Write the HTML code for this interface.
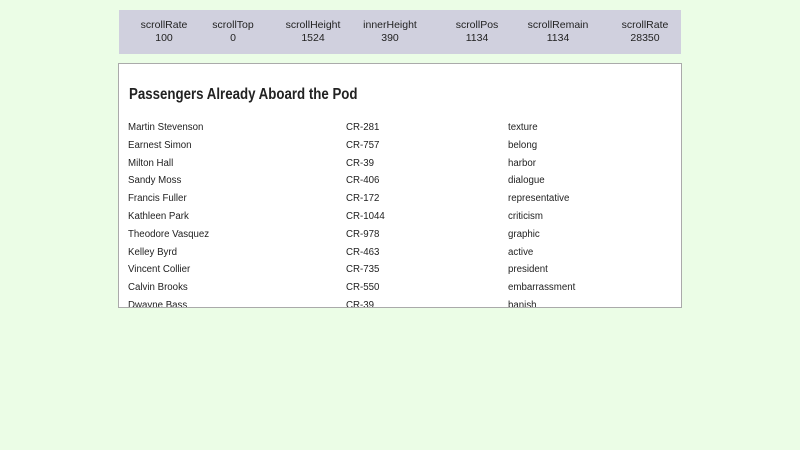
<!DOCTYPE html>
<html><head><style>
body{margin:0;background:#ebfde6;font-family:"Liberation Sans",sans-serif;color:#222;width:800px;height:450px;overflow:hidden;position:relative}
.bar{position:absolute;left:119px;top:10px;width:562px;height:44px;background:#d0d0de}
.s{position:absolute;top:9px;font-size:10.5px;text-align:center;width:100px;line-height:13px}
.box{position:absolute;left:118px;top:63px;width:562px;height:243px;background:#fff;border:1px solid #aaa;overflow:hidden}
h1{position:absolute;left:10px;top:22px;margin:0;font-size:16px;font-weight:bold;color:#222;transform:scaleX(0.83);transform-origin:left;white-space:nowrap}
.r{position:absolute;font-size:9.7px;height:18px}
.r span{position:absolute;white-space:nowrap}
</style></head><body>
<div class="bar">
<div class="s" style="left:-5px">scrollRate<br>100</div>
<div class="s" style="left:64px">scrollTop<br>0</div>
<div class="s" style="left:144px">scrollHeight<br>1524</div>
<div class="s" style="left:221px">innerHeight<br>390</div>
<div class="s" style="left:308px">scrollPos<br>1134</div>
<div class="s" style="left:389px">scrollRemain<br>1134</div>
<div class="s" style="left:476px">scrollRate<br>28350</div>
</div>
<div class="box">
<h1>Passengers Already Aboard the Pod</h1>
<div id="rows"></div>
</div>
<script>
var d=[["Martin Stevenson","CR-281","texture"],["Earnest Simon","CR-757","belong"],["Milton Hall","CR-39","harbor"],["Sandy Moss","CR-406","dialogue"],["Francis Fuller","CR-172","representative"],["Kathleen Park","CR-1044","criticism"],["Theodore Vasquez","CR-978","graphic"],["Kelley Byrd","CR-463","active"],["Vincent Collier","CR-735","president"],["Calvin Brooks","CR-550","embarrassment"],["Dwayne Bass","CR-39","banish"]];
var h="";d.forEach(function(r,i){var t=58+i*17.8;h+='<div class="r" style="top:'+t+'px;left:0;width:560px"><span style="left:9px">'+r[0]+'</span><span style="left:227px">'+r[1]+'</span><span style="left:389px">'+r[2]+'</span></div>';});
document.getElementById("rows").innerHTML=h;
</script>
</body></html>
